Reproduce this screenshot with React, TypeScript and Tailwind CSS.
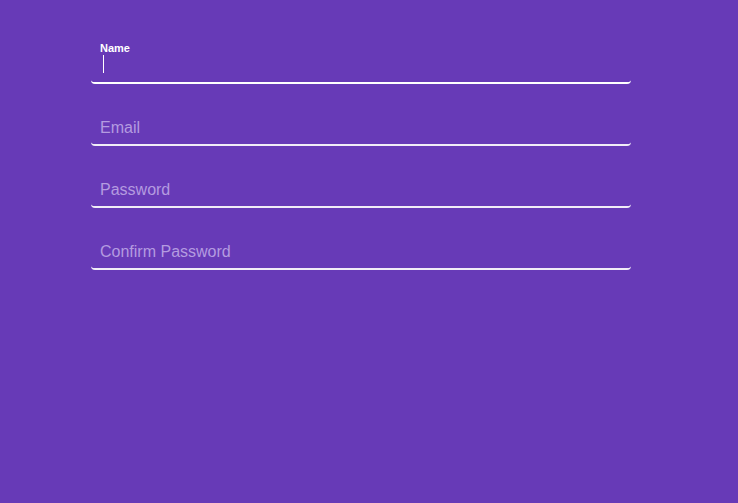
import React from "react";

const fields = [
  { key: "name", label: "Name", type: "text", focused: true },
  { key: "email", label: "Email", type: "email", focused: false },
  { key: "password", label: "Password", type: "password", focused: false },
  { key: "confirm", label: "Confirm Password", type: "password", focused: false },
];

export default function App() {
  return (
    <div
      className="min-h-screen w-full bg-[#673ab7] pt-[38px] pl-[91px]"
      style={{ fontFamily: '"Liberation Sans", Arial, sans-serif' }}
    >
      <form className="flex w-[540px] flex-col gap-[16px]">
        {fields.map((field) => (
          <div key={field.key} className="relative">
            {field.focused && (
              <>
                <span className="absolute left-[9px] top-[3px] text-[11px] font-bold leading-[14px] text-white">
                  {field.label}
                </span>
                <span className="absolute left-[12px] top-[17px] h-[18px] w-px bg-white" />
              </>
            )}
            <input
              type={field.type}
              placeholder={field.focused ? "" : field.label}
              className={`block h-[46px] w-full rounded-[4px] border-b-2 bg-transparent px-[9px] pt-[12px] text-[16px] text-white outline-none placeholder:text-[#b49be0] ${
                field.focused ? "border-white" : "border-[#f1ecf7]"
              }`}
            />
          </div>
        ))}
      </form>
    </div>
  );
}
